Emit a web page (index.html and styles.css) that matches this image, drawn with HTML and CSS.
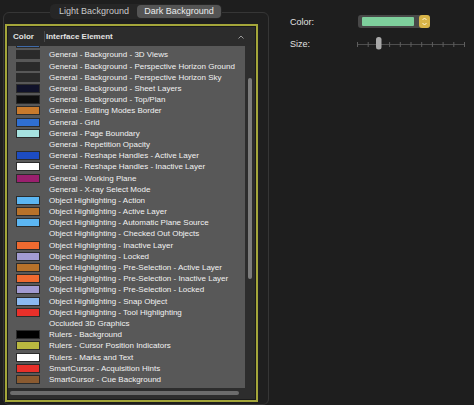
FILE: index.html
```html
<!DOCTYPE html>
<html lang="en">
<head>
    <meta charset="UTF-8">
    <title>Interface Colors</title>
    <link rel="stylesheet" href="styles.css">
</head>
<body>
    <div class="window">
        <div class="left-pane">
            <div class="segmented">
                <div class="seg">Light Background</div>
                <div class="seg selected">Dark Background</div>
            </div>
            <div class="group-box">
                <div class="table">
                    <div class="table-head">
                        <div class="col-color">Color</div>
                        <div class="col-name">Interface Element</div>
                        <svg class="caret" width="6" height="4" viewBox="0 0 6 4">
                            <path d="M0.5 3.5 L3 1 L5.5 3.5" fill="none" stroke="#9a9a9a" stroke-width="1"/>
                        </svg>
                    </div>
                    <div class="table-body">
                        <div class="list">
                            <div class="rows">
                                <div class="row"><span class="sw" style="background:#3f6aa8"></span></div>
                                <div class="row"><span class="sw" style="background:#2a2a2a"></span><span class="name">General - Background - 3D Views</span></div>
                                <div class="row"><span class="sw" style="background:#2a2a2a"></span><span class="name">General - Background - Perspective Horizon Ground</span></div>
                                <div class="row"><span class="sw" style="background:#2a2a2a"></span><span class="name">General - Background - Perspective Horizon Sky</span></div>
                                <div class="row"><span class="sw" style="background:#10122a"></span><span class="name">General - Background - Sheet Layers</span></div>
                                <div class="row"><span class="sw" style="background:#0e0e0e"></span><span class="name">General - Background - Top/Plan</span></div>
                                <div class="row"><span class="sw" style="background:#c97a2c"></span><span class="name">General - Editing Modes Border</span></div>
                                <div class="row"><span class="sw" style="background:#2f6fd2"></span><span class="name">General - Grid</span></div>
                                <div class="row"><span class="sw" style="background:#a6e2e0"></span><span class="name">General - Page Boundary</span></div>
                                <div class="row"><span class="sw none"></span><span class="name">General - Repetition Opacity</span></div>
                                <div class="row"><span class="sw" style="background:#1d4cc2"></span><span class="name">General - Reshape Handles - Active Layer</span></div>
                                <div class="row"><span class="sw" style="background:#ffffff"></span><span class="name">General - Reshape Handles - Inactive Layer</span></div>
                                <div class="row"><span class="sw" style="background:#9a1f6e"></span><span class="name">General - Working Plane</span></div>
                                <div class="row"><span class="sw none"></span><span class="name">General - X-ray Select Mode</span></div>
                                <div class="row"><span class="sw" style="background:#5cb6f2"></span><span class="name">Object Highlighting - Action</span></div>
                                <div class="row"><span class="sw" style="background:#b8722a"></span><span class="name">Object Highlighting - Active Layer</span></div>
                                <div class="row"><span class="sw" style="background:#5cb6f2"></span><span class="name">Object Highlighting - Automatic Plane Source</span></div>
                                <div class="row"><span class="sw none"></span><span class="name">Object Highlighting - Checked Out Objects</span></div>
                                <div class="row"><span class="sw" style="background:#ef6a30"></span><span class="name">Object Highlighting - Inactive Layer</span></div>
                                <div class="row"><span class="sw" style="background:#a29bd2"></span><span class="name">Object Highlighting - Locked</span></div>
                                <div class="row"><span class="sw" style="background:#b8722a"></span><span class="name">Object Highlighting - Pre-Selection - Active Layer</span></div>
                                <div class="row"><span class="sw" style="background:#ef6a30"></span><span class="name">Object Highlighting - Pre-Selection - Inactive Layer</span></div>
                                <div class="row"><span class="sw" style="background:#a29bd2"></span><span class="name">Object Highlighting - Pre-Selection - Locked</span></div>
                                <div class="row"><span class="sw" style="background:#8cbaf2"></span><span class="name">Object Highlighting - Snap Object</span></div>
                                <div class="row"><span class="sw" style="background:#e8302a"></span><span class="name">Object Highlighting - Tool Highlighting</span></div>
                                <div class="row"><span class="sw none"></span><span class="name">Occluded 3D Graphics</span></div>
                                <div class="row"><span class="sw" style="background:#000000"></span><span class="name">Rulers - Background</span></div>
                                <div class="row"><span class="sw" style="background:#b9b840"></span><span class="name">Rulers - Cursor Position Indicators</span></div>
                                <div class="row"><span class="sw" style="background:#ffffff"></span><span class="name">Rulers - Marks and Text</span></div>
                                <div class="row"><span class="sw" style="background:#e8302a"></span><span class="name">SmartCursor - Acquisition Hints</span></div>
                                <div class="row"><span class="sw" style="background:#8a5a30"></span><span class="name">SmartCursor - Cue Background</span></div>
                            </div>
                        </div>
                        <div class="vscroll"><div class="vthumb"></div></div>
                    </div>
                    <div class="hscroll"><div class="hthumb"></div></div>
                </div>
            </div>
        </div>

        <div class="right-pane">
            <div class="props">
                <div class="prop-label">Color:</div>
                <div class="well">
                    <div class="well-fill"></div>
                    <div class="stepper">
                        <svg width="11" height="13" viewBox="0 0 11 13">
                            <path d="M3.5 5 L5.5 3 L7.5 5" fill="none" stroke="#fff6d6" stroke-width="1"/>
                            <path d="M3.5 8 L5.5 10 L7.5 8" fill="none" stroke="#fff6d6" stroke-width="1"/>
                        </svg>
                    </div>
                </div>
                <div class="prop-label">Size:</div>
                <svg class="slider" width="110" height="13" viewBox="0 0 110 13">
                    <line x1="0" y1="7.5" x2="108" y2="7.5" stroke="#4e4e4e" stroke-width="1"/>
                    <g stroke="#5e5e5e" stroke-width="1">
                        <line x1="0.5" y1="5" x2="0.5" y2="10"/>
                        <line x1="11.2" y1="5" x2="11.2" y2="10"/>
                        <line x1="21.9" y1="5" x2="21.9" y2="10"/>
                        <line x1="32.6" y1="5" x2="32.6" y2="10"/>
                        <line x1="43.3" y1="5" x2="43.3" y2="10"/>
                        <line x1="54" y1="5" x2="54" y2="10"/>
                        <line x1="64.7" y1="5" x2="64.7" y2="10"/>
                        <line x1="75.4" y1="5" x2="75.4" y2="10"/>
                        <line x1="86.1" y1="5" x2="86.1" y2="10"/>
                        <line x1="96.8" y1="5" x2="96.8" y2="10"/>
                        <line x1="107.5" y1="5" x2="107.5" y2="10"/>
                    </g>
                    <rect x="19" y="0" width="5.5" height="12.5" rx="2.5" fill="#a9a9a9"/>
                </svg>
            </div>
        </div>
    </div>
</body>
</html>
```

FILE: styles.css
```css
html, body {
    margin: 0;
    background: #1e1e1e;
}
body {
    font-family: "Liberation Sans", Arial, sans-serif;
    color: #e6e6e6;
    width: 474px;
    height: 405px;
    overflow: hidden;
}
.window {
    display: flex;
    height: 405px;
}

/* left side */
.left-pane {
    width: 266px;
    padding-left: 3px;
    display: flex;
    flex-direction: column;
    align-items: center;
}
.segmented {
    position: relative;
    z-index: 1;
    margin-top: 4px;
    height: 15px;
    box-sizing: border-box;
    padding: 1px;
    display: flex;
    background: #262626;
    border-radius: 5px;
}
.seg {
    width: 86px;
    height: 13px;
    line-height: 13px;
    font-size: 9px;
    text-align: center;
    color: #c9c9c9;
}
.seg.selected {
    width: 84px;
    background: #545454;
    border-radius: 4px;
    color: #ececec;
}
.group-box {
    margin-top: -7px;
    width: 266px;
    height: 393px;
    box-sizing: border-box;
    border: 1px solid #363636;
    border-radius: 6px;
    background: #1f1f1f;
    padding: 11px 10px 2px 1px;
}
.table {
    height: 100%;
    box-sizing: border-box;
    border: 2px solid #a4a63a;
    display: flex;
    flex-direction: column;
}
.table-head {
    height: 19px;
    flex: none;
    display: flex;
    align-items: center;
    background: #2c2c2c;
    border: 1px solid #1b1b1b;
    border-bottom: none;
    font-size: 8px;
    font-weight: bold;
    color: #e2e2e2;
}
.col-color {
    width: 31px;
    padding-left: 5px;
    border-right: 1px solid #4a4a4a;
    line-height: 11px;
}
.col-name {
    padding-left: 1px;
    flex: 1;
}
.caret {
    margin-right: 11px;
    margin-top: 1px;
}
.table-body {
    flex: 1;
    display: flex;
    min-height: 0;
    border-left: 1px solid #1b1b1b;
    border-right: 1px solid #1b1b1b;
}
.list {
    flex: 1;
    overflow: hidden;
    background: #585858;
}
.rows {
    margin-top: -7.8px;
}
.row {
    height: 11.2px;
    display: flex;
    align-items: center;
    font-size: 8px;
    white-space: nowrap;
}
.sw {
    flex: none;
    width: 24px;
    height: 9px;
    box-sizing: border-box;
    border: 1px solid #2b2b2b;
    margin-left: 8px;
}
.sw.none {
    border-color: transparent;
}
.name {
    margin-left: 9px;
    color: #f2f2f2;
}
.vscroll {
    width: 10px;
    flex: none;
    background: #2d2d2d;
}
.vthumb {
    margin: 32px 0 0 3px;
    width: 4px;
    height: 201px;
    border-radius: 2px;
    background: #7c7c7c;
}
.hscroll {
    height: 12px;
    flex: none;
    box-sizing: border-box;
    padding: 3px 0 0 2px;
    background: #2d2d2d;
    border: 1px solid #1b1b1b;
    border-top: none;
}
.hthumb {
    width: 229px;
    height: 4px;
    border-radius: 2px;
    background: #6c6c6c;
}

/* right side */
.right-pane {
    flex: 1;
    padding: 15px 0 0 21px;
}
.props {
    display: grid;
    grid-template-columns: 68px auto;
    row-gap: 9px;
    align-items: center;
    justify-items: start;
}
.prop-label {
    font-size: 9px;
    color: #e2e2e2;
}
.well {
    width: 72px;
    height: 13px;
    display: flex;
    align-items: center;
    padding-left: 4px;
    box-sizing: border-box;
    background: #484848;
    border-radius: 3px;
}
.well-fill {
    width: 52px;
    height: 9px;
    background: #7ecf9c;
    border-radius: 1px;
}
.stepper {
    margin-left: auto;
    width: 11px;
    height: 13px;
    background: #d8b448;
    border-radius: 3px;
}
.stepper svg {
    display: block;
}
.slider {
    display: block;
    margin-left: -1px;
}
```
